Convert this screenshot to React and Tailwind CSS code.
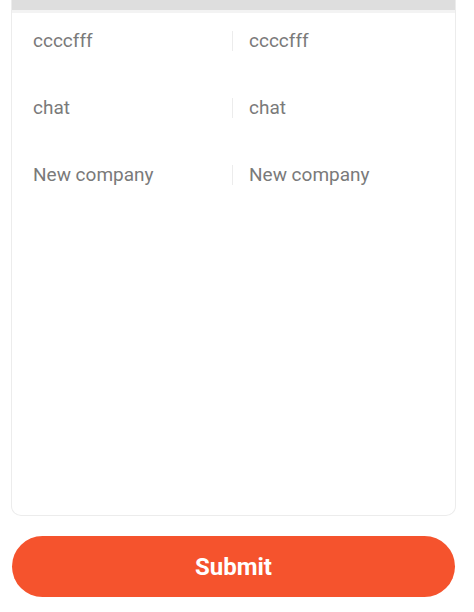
import React from 'react';

const rows = ['ccccfff', 'chat', 'New company'];

const App = () => {
  return (
    <div className="w-[474px] h-[612px] bg-white font-['Roboto',sans-serif] flex flex-col pl-[11px] pr-[18px]">
      {/* Card */}
      <div className="h-[516px] border border-[#ececec] border-t-0 rounded-b-[10px] flex flex-col">
        <div className="h-[10px] bg-[#dedede]" />
        <div className="h-[3px] bg-[#f3f3f3]" />
        <div className="flex flex-col pt-[15px] gap-[41px]">
          {rows.map((r) => (
            <div key={r} className="flex items-center h-[26px] text-[19px] text-[#7a7a7a]">
              <div className="w-[220px] pl-[21px]">{r}</div>
              <div className="w-px h-[20px] bg-[#ececec]" />
              <div className="pl-[16px]">{r}</div>
            </div>
          ))}
        </div>
      </div>

      {/* Submit */}
      <button className="mt-[20px] mx-px h-[61px] rounded-full bg-[#f5532d] text-white text-[24px] font-bold">
        Submit
      </button>
    </div>
  );
};

export default App;
